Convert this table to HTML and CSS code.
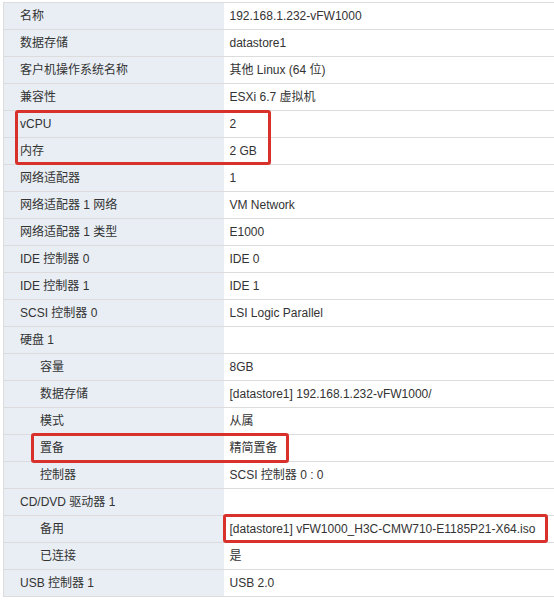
FILE: index.html
```html
<!DOCTYPE html>
<html>
<head>
<meta charset="utf-8">
<link rel="stylesheet" href="styles.css">
</head>
<body>
<div class="wrap">
  <table class="props">
    <tr><td class="k">名称</td><td class="v">192.168.1.232-vFW1000</td></tr>
    <tr><td class="k">数据存储</td><td class="v">datastore1</td></tr>
    <tr><td class="k">客户机操作系统名称</td><td class="v">其他 Linux (64 位)</td></tr>
    <tr><td class="k">兼容性</td><td class="v">ESXi 6.7 虚拟机</td></tr>
    <tr><td class="k">vCPU</td><td class="v">2</td></tr>
    <tr><td class="k">内存</td><td class="v">2 GB</td></tr>
    <tr><td class="k">网络适配器</td><td class="v">1</td></tr>
    <tr><td class="k">网络适配器 1 网络</td><td class="v">VM Network</td></tr>
    <tr><td class="k">网络适配器 1 类型</td><td class="v">E1000</td></tr>
    <tr><td class="k">IDE 控制器 0</td><td class="v">IDE 0</td></tr>
    <tr><td class="k">IDE 控制器 1</td><td class="v">IDE 1</td></tr>
    <tr><td class="k">SCSI 控制器 0</td><td class="v">LSI Logic Parallel</td></tr>
    <tr><td class="k">硬盘 1</td><td class="v"></td></tr>
    <tr><td class="k sub">容量</td><td class="v">8GB</td></tr>
    <tr><td class="k sub">数据存储</td><td class="v">[datastore1] 192.168.1.232-vFW1000/</td></tr>
    <tr><td class="k sub">模式</td><td class="v">从属</td></tr>
    <tr><td class="k sub">置备</td><td class="v">精简置备</td></tr>
    <tr><td class="k sub">控制器</td><td class="v">SCSI 控制器 0 : 0</td></tr>
    <tr><td class="k">CD/DVD 驱动器 1</td><td class="v"></td></tr>
    <tr><td class="k sub">备用</td><td class="v">[datastore1] vFW1000_H3C-CMW710-E1185P21-X64.iso</td></tr>
    <tr><td class="k sub">已连接</td><td class="v">是</td></tr>
    <tr><td class="k">USB 控制器 1</td><td class="v">USB 2.0</td></tr>
  </table>
  <div class="mark mark-cpu"></div>
  <div class="mark mark-prov"></div>
  <div class="mark mark-iso"></div>
</div>
</body>
</html>
```

FILE: styles.css
```css
html, body {
  margin: 0;
  padding: 0;
  background: #fff;
}
body {
  font-family: "Liberation Sans", Arial, "Noto Sans CJK SC", sans-serif;
  font-size: 12px;
  color: #333;
}
.wrap {
  position: relative;
  padding: 2px 0 0 3px;
}
.props {
  border-collapse: collapse;
  width: 551px;
  border-left: 1px solid #dcdcdc;
  border-top: 1px solid #dcdcdc;
}
.props td {
  height: 26px;
  padding: 0;
  border-bottom: 1px solid #dcdcdc;
  vertical-align: middle;
  white-space: nowrap;
  line-height: 14px;
}
.k {
  width: 220px;
  background: #e8eef4;
  padding-left: 16px !important;
  box-sizing: border-box;
}
.k.sub {
  padding-left: 36px !important;
}
.v {
  background: #fff;
  padding-left: 6px !important;
}
.mark {
  position: absolute;
  border: 3px solid #d8302b;
  border-radius: 3px;
  box-sizing: border-box;
}
.mark-cpu {
  left: 15px;
  top: 110px;
  width: 256px;
  height: 55px;
}
.mark-prov {
  left: 31px;
  top: 433px;
  width: 258px;
  height: 30px;
}
.mark-iso {
  left: 223px;
  top: 514px;
  width: 325px;
  height: 29px;
}
```
